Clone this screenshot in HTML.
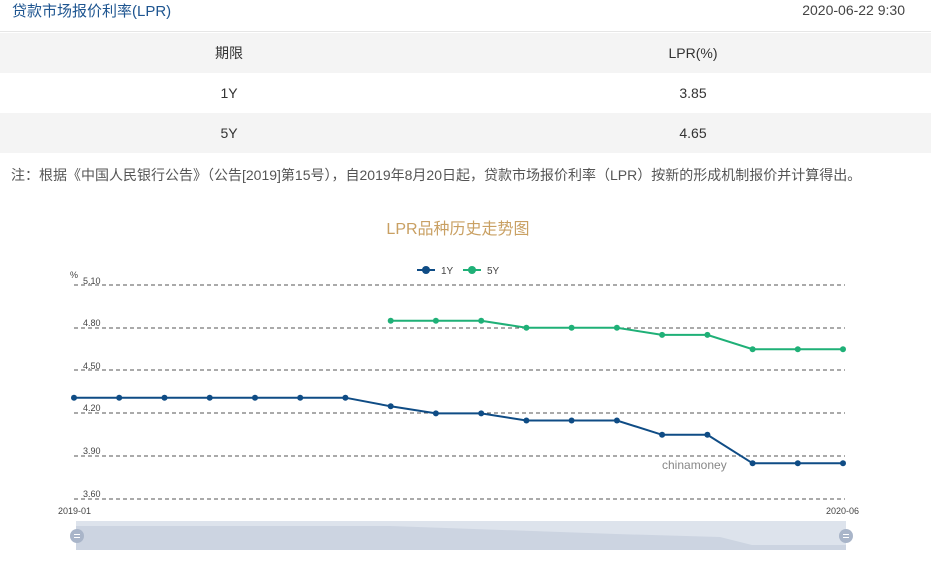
<!DOCTYPE html>
<html><head><meta charset="utf-8"><style>
body{margin:0;width:931px;height:567px;background:#fff;font-family:"Liberation Sans","Noto Sans CJK SC",sans-serif;position:relative;overflow:hidden}
.t{position:absolute;left:12px;top:0px;font-size:15px;color:#1e5590}
.d{position:absolute;right:26px;top:2px;font-size:14px;color:#444}
.hr{position:absolute;left:0;top:31px;width:931px;height:1px;background:#e6e6e6}
.row{position:absolute;left:0;width:931px;height:40px;font-size:14px;color:#333;line-height:40px}
.row span{position:absolute;transform:translateX(-50%)}
.g{background:#f4f4f4}
.n{position:absolute;left:11px;top:165px;font-size:14px;color:#555}
</style></head><body>
<div class="t">贷款市场报价利率(LPR)</div>
<div class="d">2020-06-22 9:30</div>
<div class="hr"></div>
<div class="row g" style="top:33px"><span style="left:229px">期限</span><span style="left:693px">LPR(%)</span></div>
<div class="row" style="top:73px"><span style="left:229px">1Y</span><span style="left:693px">3.85</span></div>
<div class="row g" style="top:113px"><span style="left:229px">5Y</span><span style="left:693px">4.65</span></div>
<div class="n">注：根据《中国人民银行公告》（公告[2019]第15号），自2019年8月20日起，贷款市场报价利率（LPR）按新的形成机制报价并计算得出。</div>
<svg style="position:absolute;left:0;top:0" width="931" height="567" font-family="Liberation Sans, sans-serif">
<text x="458" y="234" font-size="16" fill="#c9a063" text-anchor="middle" font-family="Liberation Sans, Noto Sans CJK SC, sans-serif">LPR品种历史走势图</text>
<g stroke="#555" stroke-dasharray="4,3" stroke-width="1">
<line x1="74" y1="285" x2="845" y2="285"/><line x1="74" y1="328" x2="845" y2="328"/><line x1="74" y1="370" x2="845" y2="370"/><line x1="74" y1="413" x2="845" y2="413"/><line x1="74" y1="456" x2="845" y2="456"/><line x1="74" y1="499" x2="845" y2="499"/>
</g>
<g font-size="9" fill="#444">
<text x="70" y="278">%</text>
<text x="83" y="284">5.10</text><text x="83" y="326">4.80</text><text x="83" y="369">4.50</text><text x="83" y="411">4.20</text><text x="83" y="454">3.90</text><text x="83" y="497">3.60</text>
<text x="58" y="514">2019-01</text><text x="826" y="514">2020-06</text>
</g>
<text x="662" y="469" font-size="12" fill="#888">chinamoney</text>
<g><line x1="417" y1="270" x2="435" y2="270" stroke="#0f4c85" stroke-width="2"/><circle cx="426" cy="270" r="4" fill="#0f4c85"/><text x="441" y="274" font-size="10" fill="#444">1Y</text>
<line x1="463" y1="270" x2="481" y2="270" stroke="#1fb077" stroke-width="2"/><circle cx="472" cy="270" r="4" fill="#1fb077"/><text x="487" y="274" font-size="10" fill="#444">5Y</text></g>
<polyline fill="none" stroke="#0f4c85" stroke-width="2" points="74,397.7 119.2,397.7 164.5,397.7 209.7,397.7 255,397.7 300.2,397.7 345.4,397.7 390.7,406.3 435.9,413.4 481.2,413.4 526.4,420.5 571.6,420.5 616.9,420.5 662.1,434.8 707.4,434.8 752.6,463.3 797.8,463.3 843,463.3"/>
<g fill="#0f4c85"><circle cx="74" cy="397.7" r="3"/><circle cx="119.2" cy="397.7" r="3"/><circle cx="164.5" cy="397.7" r="3"/><circle cx="209.7" cy="397.7" r="3"/><circle cx="255" cy="397.7" r="3"/><circle cx="300.2" cy="397.7" r="3"/><circle cx="345.4" cy="397.7" r="3"/><circle cx="390.7" cy="406.3" r="3"/><circle cx="435.9" cy="413.4" r="3"/><circle cx="481.2" cy="413.4" r="3"/><circle cx="526.4" cy="420.5" r="3"/><circle cx="571.6" cy="420.5" r="3"/><circle cx="616.9" cy="420.5" r="3"/><circle cx="662.1" cy="434.8" r="3"/><circle cx="707.4" cy="434.8" r="3"/><circle cx="752.6" cy="463.3" r="3"/><circle cx="797.8" cy="463.3" r="3"/><circle cx="843" cy="463.3" r="3"/></g>
<polyline fill="none" stroke="#1fb077" stroke-width="2" points="390.7,320.7 435.9,320.7 481.2,320.7 526.4,327.8 571.6,327.8 616.9,327.8 662.1,334.9 707.4,334.9 752.6,349.2 797.8,349.2 843,349.2"/>
<g fill="#1fb077"><circle cx="390.7" cy="320.7" r="3"/><circle cx="435.9" cy="320.7" r="3"/><circle cx="481.2" cy="320.7" r="3"/><circle cx="526.4" cy="327.8" r="3"/><circle cx="571.6" cy="327.8" r="3"/><circle cx="616.9" cy="327.8" r="3"/><circle cx="662.1" cy="334.9" r="3"/><circle cx="707.4" cy="334.9" r="3"/><circle cx="752.6" cy="349.2" r="3"/><circle cx="797.8" cy="349.2" r="3"/><circle cx="843" cy="349.2" r="3"/></g>
<rect x="76" y="521" width="770" height="29" fill="#dde3ec"/>
<polygon points="76,526 390,526 616,534 720,537 752,545 846,545 846,550 76,550" fill="#ccd4e1"/>
<circle cx="77" cy="536" r="7" fill="#a9b5c9"/><line x1="74" y1="534.5" x2="80" y2="534.5" stroke="#fff"/><line x1="74" y1="537.5" x2="80" y2="537.5" stroke="#fff"/>
<circle cx="846" cy="536" r="7" fill="#a9b5c9"/><line x1="843" y1="534.5" x2="849" y2="534.5" stroke="#fff"/><line x1="843" y1="537.5" x2="849" y2="537.5" stroke="#fff"/>
</svg>
</body></html>
